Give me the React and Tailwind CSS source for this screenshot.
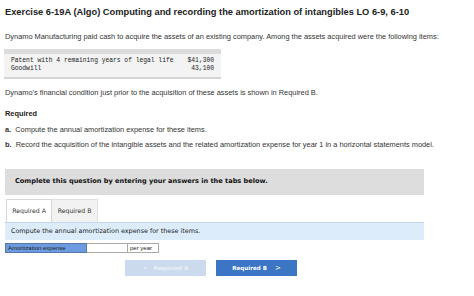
import React from "react";

const body = "text-[7.4px] leading-[9px]";

const App = () => (
  <div className="w-[474px] h-[296px] bg-white px-[5px] pt-[6px] text-[#333] overflow-hidden" style={{ fontFamily: '"Liberation Sans", Arial, sans-serif' }}>
    <h1 className="text-[9.3px] font-bold leading-[12px] text-[#222]">
      Exercise 6-19A (Algo) Computing and recording the amortization of intangibles LO 6-9, 6-10
    </h1>

    <p className={`mt-[14px] ${body}`}>
      Dynamo Manufacturing paid cash to acquire the assets of an existing company. Among the assets acquired were the following items:
    </p>

    <div className="mt-[8px] w-[217px] -ml-[1px] bg-[#f3f3f3] border-b-2 border-[#d4d4d4]">
      <div className="h-[5px] bg-[#dcdcdc]" />
      <div className="flex justify-between px-[7px] pt-[3px] pb-[4px] text-[6.3px] leading-[8px] text-[#222]" style={{ fontFamily: '"Liberation Mono", "Courier New", monospace' }}>
        <div>
          <div>Patent with 4 remaining years of legal life</div>
          <div>Goodwill</div>
        </div>
        <div className="text-right">
          <div>$41,300</div>
          <div>43,100</div>
        </div>
      </div>
    </div>

    <p className={`mt-[9px] ${body}`}>
      Dynamo's financial condition just prior to the acquisition of these assets is shown in Required B.
    </p>

    <p className={`mt-[12px] ${body} font-bold text-[#222]`}>Required</p>
    <p className={`mt-[7px] ${body}`}>
      <span className="font-bold">a.</span>&nbsp; Compute the annual amortization expense for these items.
    </p>
    <p className={`mt-[6px] ${body}`}>
      <span className="font-bold">b.</span>&nbsp; Record the acquisition of the intangible assets and the related amortization expense for year 1 in a horizontal statements model.
    </p>

    <div className="mt-[20px] w-[419px] h-[26px] bg-[#dddddd] flex items-center pl-[10px]">
      <span className="text-[6.6px] font-bold text-[#111]" style={{ fontFamily: 'Verdana, "DejaVu Sans", sans-serif' }}>
        Complete this question by entering your answers in the tabs below.
      </span>
    </div>

    <div className="mt-[4px] w-[419px]" style={{ fontFamily: 'Verdana, "DejaVu Sans", sans-serif' }}>
      <div className="flex pl-[1px]">
        <div className="w-[46px] h-[23px] bg-white border border-b-0 border-[#d6d6d6] flex items-center justify-center text-[6.2px] text-[#333]">
          Required A
        </div>
        <div className="w-[46px] h-[23px] bg-[#f2f2f2] border border-b-0 border-l-0 border-[#e0e0e0] flex items-center justify-center text-[6.2px] text-[#333]">
          Required B
        </div>
      </div>
      <div className="h-[18px] bg-[#dcecfb] border-t border-[#c5d8ea] flex items-center pl-[6px] text-[6.4px] text-[#222]">
        Compute the annual amortization expense for these items.
      </div>
      <div className="mt-[3px] flex h-[10px] text-[6px] text-[#222]" style={{ fontFamily: '"Liberation Sans", Arial, sans-serif' }}>
        <div className="w-[82px] bg-[#6d9be0] border border-[#5578a8] flex items-center pl-[2px]">Amortization expense</div>
        <div className="w-[40px] bg-white border-y border-[#aaa]" />
        <div className="w-[32px] bg-white border border-[#aaa] flex items-center pl-[2px]">per year</div>
      </div>
      <div className="mt-[7px] flex pl-[120px] gap-[10px]">
        <div className="w-[81px] h-[16px] bg-[#cbdaec] flex items-center justify-center text-[5.6px] font-bold text-[#e9f0f8]">
          <span className="mr-[6px]">&lt;</span>Required A
        </div>
        <div className="w-[81px] h-[16px] bg-[#3b75c3] flex items-center justify-center text-[5.6px] font-bold text-white">
          Required B<span className="ml-[8px] font-normal text-[7px]">&gt;</span>
        </div>
      </div>
    </div>
  </div>
);

export default App;
